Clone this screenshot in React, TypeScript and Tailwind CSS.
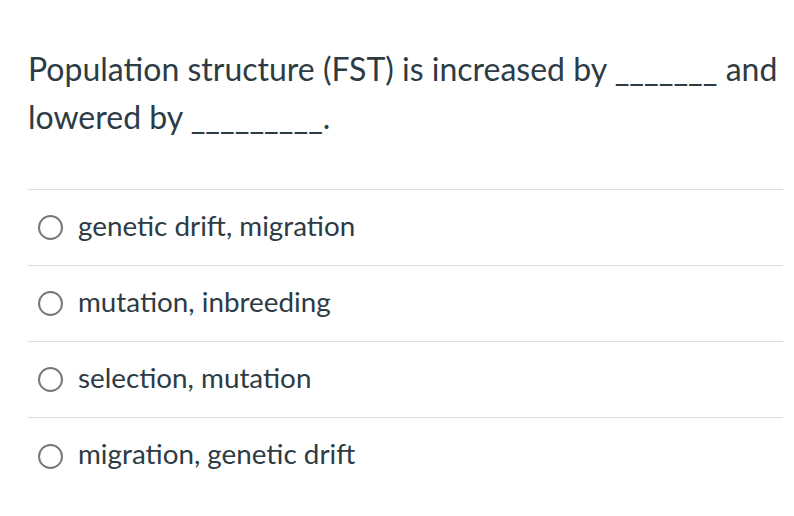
const OPTIONS = [
  'genetic drift, migration',
  'mutation, inbreeding',
  'selection, mutation',
  'migration, genetic drift',
]

export default function App() {
  return (
    <div className="w-[794px] h-[516px] bg-white pl-[28px] pr-[11px] pt-[45px] font-['Lato',sans-serif] text-[#2d3b45]">
      {/* Question */}
      <p className="text-[32px] leading-[48px] mb-[48px]">
        Population structure (FST) is increased by _______ and lowered by _________.
      </p>

      {/* Answers */}
      <div className="border-t border-[#dcdcdc]">
        {OPTIONS.map(opt => (
          <label key={opt} className="flex items-center h-[76px] border-b border-[#dcdcdc] last:border-b-0 pl-[10px] gap-[15px]">
            <span className="w-[25px] h-[25px] rounded-full border-2 border-[#787878] shrink-0" />
            <span className="text-[27.8px] mb-[4px]">{opt}</span>
          </label>
        ))}
      </div>
    </div>
  )
}
